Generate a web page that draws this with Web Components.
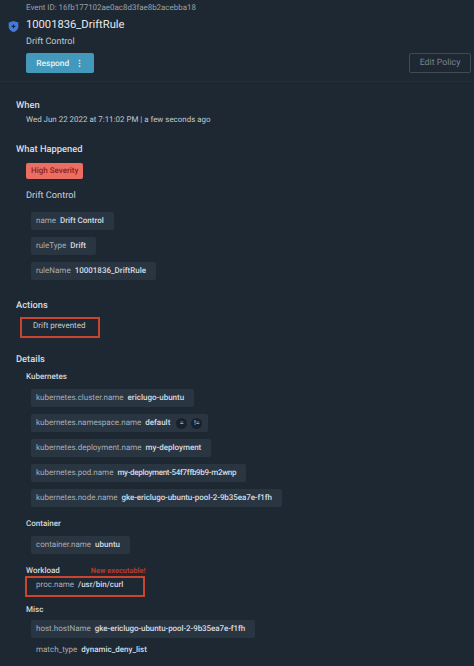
<!DOCTYPE html>
<html>
<head>
<meta charset="utf-8">
<style>
  html, body { margin: 0; height: 666px; overflow: hidden; background: #1e2833; }
  body { font-family: Roboto, "Liberation Sans", sans-serif; color: #d5d9dd; text-rendering: geometricPrecision; }
</style>
</head>
<body>
<event-panel>
  <event-header></event-header>
  <event-section title="When" style="--gap:2px;--top:17px">
    <div style="font-size:7.95px;color:#c3c8cd;padding-left:10px;line-height:12px">Wed Jun 22 2022 at 7:11:02 PM | a few seconds ago</div>
  </event-section>
  <event-section title="What Happened" style="--gap:7px;--top:17px">
    <severity-badge>High Severity</severity-badge>
    <div style="font-size:9.2px;padding:10px 0 9px 10px;line-height:14px;color:#cfd3d8">Drift Control</div>
    <kv-pill name="name" value="Drift Control" style="--pill-ml:15px"></kv-pill>
    <kv-pill name="ruleType" value="Drift" style="--pill-ml:15px"></kv-pill>
    <kv-pill name="ruleName" value="10001836_DriftRule" style="--pill-ml:15px"></kv-pill>
  </event-section>
  <event-section title="Actions" style="--gap:5px;--top:12px">
    <action-box>Drift prevented</action-box>
  </event-section>
  <event-section title="Details" style="--gap:5px;--top:15px">
    <detail-group title="Kubernetes" style="--title-gap:6px">
      <kv-pill name="kubernetes.cluster.name" value="ericlugo-ubuntu"></kv-pill>
      <kv-pill name="kubernetes.namespace.name" value="default" filters></kv-pill>
      <kv-pill name="kubernetes.deployment.name" value="my-deployment"></kv-pill>
      <kv-pill name="kubernetes.pod.name" value="my-deployment-54f7ffb9b9-m2wnp" style="--v-ls:-.3px"></kv-pill>
      <kv-pill name="kubernetes.node.name" value="gke-ericlugo-ubuntu-pool-2-9b35ea7e-f1fh" style="--v-ls:-.08px"></kv-pill>
    </detail-group>
    <detail-group title="Container" style="--mt:11px;--title-gap:6px">
      <kv-pill name="container.name" value="ubuntu"></kv-pill>
    </detail-group>
    <detail-group title="Workload" note="New executable!" style="--mt:11px;--title-gap:-1px">
      <kv-pill name="proc.name" value="/usr/bin/curl" flagged></kv-pill>
    </detail-group>
    <detail-group title="Misc" style="--mt:7px;--title-gap:4px">
      <kv-pill name="host.hostName" value="gke-ericlugo-ubuntu-pool-2-9b35ea7e-f1fh" style="--v-ls:-.08px;margin-bottom:3px"></kv-pill>
      <kv-pill name="match_type" value="dynamic_deny_list" plain></kv-pill>
    </detail-group>
  </event-section>
</event-panel>

<script>
class EventPanel extends HTMLElement {
  constructor() {
    super();
    this.attachShadow({ mode: "open" });
    this.shadowRoot.innerHTML = `
      <style>
        :host { display: block; width: 474px; height: 666px; overflow: hidden; box-sizing: border-box; }
      </style>
      <slot></slot>
    `;
  }
}

class EventHeader extends HTMLElement {
  constructor() {
    super();
    this.attachShadow({ mode: "open" });
    this.shadowRoot.innerHTML = `
      <style>
        :host { display: block; height: 82px; box-sizing: border-box; padding: 2px 3px 0 8px; border-bottom: 1px solid #232e39; }
        .wrap { display: flex; gap: 7px; }
        svg { width: 11px; height: 13px; margin-top: 18px; flex: none; }
        .main { flex: 1; min-width: 0; }
        .id { font-size: 7.95px; line-height: 12px; color: #9aa1a8; }
        .title { font-size: 11.2px; line-height: 18px; margin-top: 2px; color: #e6e9eb; }
        .sub { font-size: 9px; line-height: 14px; margin-top: 1px; color: #c3c8cd; }
        .actions { display: flex; justify-content: space-between; margin-top: 4px; }
        button { font-family: inherit; text-rendering: inherit; box-sizing: border-box; height: 20px; border-radius: 2px; font-size: 8.4px; padding: 0; }
        .respond { width: 68px; background: #4399bb; border: 0; color: #e8f3f7; font-weight: 500; }
        .respond span { margin-left: 6px; font-weight: 700; }
        .edit { width: 62px; background: transparent; border: 1px solid #414b56; color: #7a838c; font-size: 8.8px; }
      </style>
      <div class="wrap">
        <svg viewBox="0 0 13 14">
          <path d="M6.5 .4 12.2 2.4V7c0 3.2-2.3 5.5-5.7 6.7C3.1 12.5.8 10.2.8 7V2.4Z" fill="#4479dc"/>
          <path d="M6.5 4.6v4.4M4.3 6.8h4.4" stroke="#16243a" stroke-width="1.3"/>
        </svg>
        <div class="main">
          <div class="id">Event ID: 16fb177102ae0ac8d3fae8b2acebba18</div>
          <div class="title">10001836_DriftRule</div>
          <div class="sub">Drift Control</div>
          <div class="actions">
            <button class="respond">Respond<span>⋮</span></button>
            <button class="edit">Edit Policy</button>
          </div>
        </div>
      </div>
    `;
  }
}

class EventSection extends HTMLElement {
  constructor() {
    super();
    this.attachShadow({ mode: "open" });
    this.shadowRoot.innerHTML = `
      <style>
        :host { display: block; padding: var(--top, 16px) 0 0 16px; }
        h3 { margin: 0 0 var(--gap, 6px); font-size: 9.35px; line-height: 13px; font-weight: 500; color: #d9dde0; }
      </style>
      <h3></h3>
      <slot></slot>
    `;
  }
  connectedCallback() {
    this.shadowRoot.querySelector("h3").textContent = this.getAttribute("title");
    this.removeAttribute("title");
  }
}

class SeverityBadge extends HTMLElement {
  constructor() {
    super();
    this.attachShadow({ mode: "open" });
    this.shadowRoot.innerHTML = `
      <style>
        :host { display: block; width: max-content; margin-left: 10px; padding: 0 5px; height: 16px; line-height: 16px; border-radius: 2px; background: #ec6e62; color: #8c1f1a; font-size: 8px; font-weight: 500; }
      </style>
      <slot></slot>
    `;
  }
}

class ActionBox extends HTMLElement {
  constructor() {
    super();
    this.attachShadow({ mode: "open" });
    this.shadowRoot.innerHTML = `
      <style>
        :host { display: block; box-sizing: border-box; width: 80px; height: 21px; margin-left: 4px; padding-left: 11px; line-height: 14px; border: 2px solid #c9452f; font-size: 8px; color: #c9cdd2; }
      </style>
      <slot></slot>
    `;
  }
}

class DetailGroup extends HTMLElement {
  constructor() {
    super();
    this.attachShadow({ mode: "open" });
    this.shadowRoot.innerHTML = `
      <style>
        :host { display: block; margin-top: var(--mt, 0); padding-left: 10px; }
        .head { display: flex; align-items: baseline; gap: 31px; margin-bottom: var(--title-gap, 5px); }
        h4 { margin: 0; font-size: 8px; line-height: 12px; font-weight: 500; color: #d5d9dd; }
        .note { font-size: 7.4px; font-weight: 700; color: #b8392b; }
      </style>
      <div class="head"><h4></h4><span class="note"></span></div>
      <slot></slot>
    `;
  }
  connectedCallback() {
    this.shadowRoot.querySelector("h4").textContent = this.getAttribute("title");
    this.shadowRoot.querySelector(".note").textContent = this.getAttribute("note") || "";
    this.removeAttribute("title");
  }
}

class KvPill extends HTMLElement {
  constructor() {
    super();
    this.attachShadow({ mode: "open" });
    this.shadowRoot.innerHTML = `
      <style>
        :host { display: block; width: max-content; box-sizing: border-box; height: 18px; margin: 0 0 7px var(--pill-ml, 5px); padding: 0 10px 0 5px; background: #2a3542; border-radius: 2px; font-size: 8px; line-height: 17px; white-space: nowrap; }
        :host([plain]) { background: transparent; margin-bottom: 0; }
        :host([flagged]) { background: transparent; border: 2px solid #c9452f; width: 120px; height: 21px; margin: 0 0 0 -1px; padding: 0 4px 0 9px; line-height: 14px; border-radius: 0; }
        .k { color: #a7aeb5; }
        .v { color: #d8dce0; margin-left: 4px; font-weight: 500; letter-spacing: var(--v-ls, 0); }
        .f { display: inline-block; width: 11px; height: 11px; border-radius: 50%; background: #18212b; color: #b9bfc5; font-size: 7px; line-height: 10px; text-align: center; margin-left: 4px; font-weight: 500; }
      </style>
      <span class="k"></span><span class="v"></span>
    `;
  }
  connectedCallback() {
    this.shadowRoot.querySelector(".k").textContent = this.getAttribute("name");
    this.shadowRoot.querySelector(".v").textContent = this.getAttribute("value");
    if (this.hasAttribute("filters")) {
      this.style.paddingRight = "6px";
      for (const op of ["=", "!="]) {
        const f = document.createElement("span");
        f.className = "f";
        f.textContent = op;
        this.shadowRoot.appendChild(f);
      }
    }
  }
}

customElements.define("event-panel", EventPanel);
customElements.define("event-header", EventHeader);
customElements.define("event-section", EventSection);
customElements.define("severity-badge", SeverityBadge);
customElements.define("action-box", ActionBox);
customElements.define("detail-group", DetailGroup);
customElements.define("kv-pill", KvPill);
</script>
</body>
</html>
